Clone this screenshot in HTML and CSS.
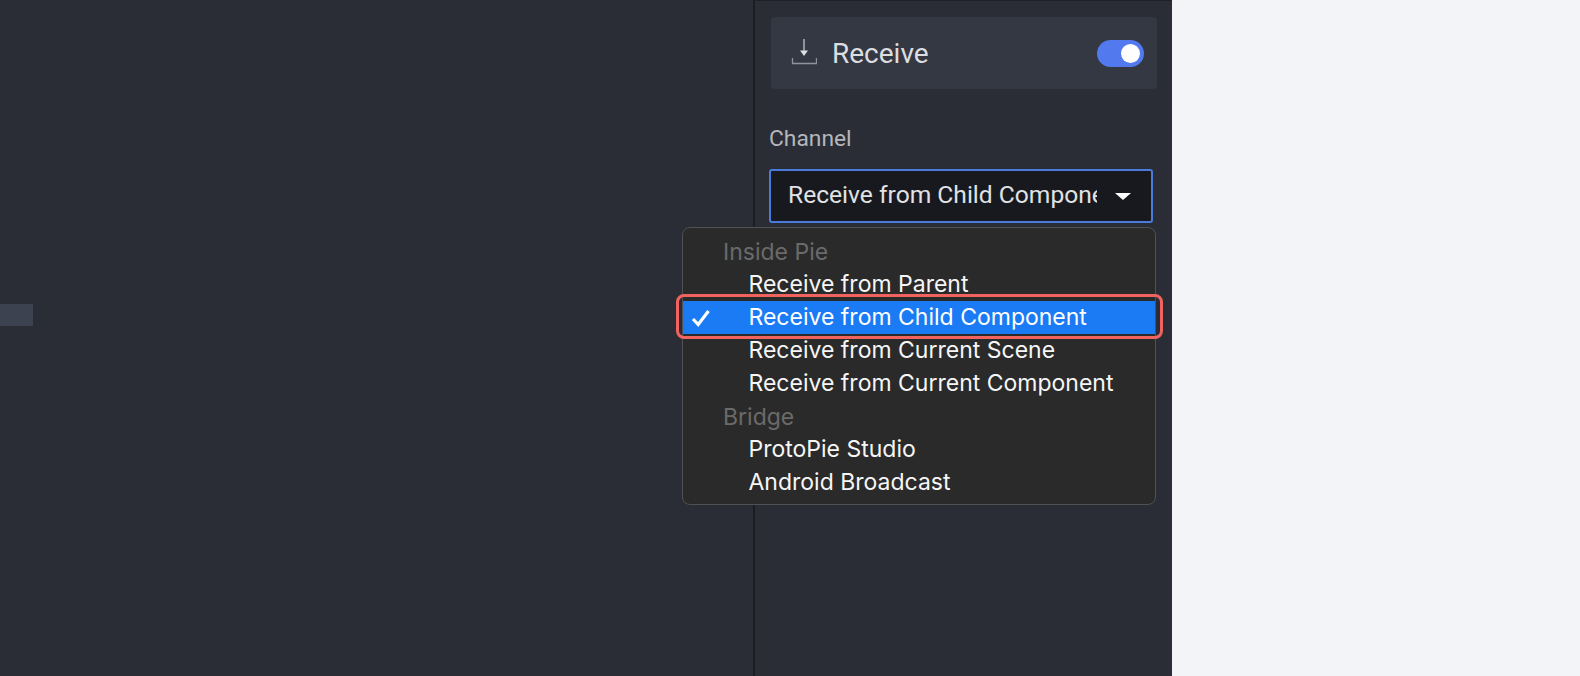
FILE: index.html
```html
<!DOCTYPE html>
<html lang="en">
<head>
<meta charset="utf-8">
<title>Receive</title>
<link rel="stylesheet" href="styles.css">
</head>
<body>
<div class="app">
  <main class="canvas"><div class="canvas-bar"></div></main>
  <aside class="panel">
    <div class="card">
      <svg class="card-icon" width="28" height="28" viewBox="0 0 28 28" fill="none">
        <path d="M15 1V14" stroke="#c3c5ca" stroke-width="1.3"/>
        <path d="M11 12.5h8L15 18z" fill="#dcdde0"/>
        <path d="M3.5 20v5.5h24V20" stroke="#8f929a" stroke-width="1.3"/>
      </svg>
      <span class="card-title">Receive</span>
      <span class="toggle"><span class="knob"></span></span>
    </div>
    <div class="label">Channel</div>
    <div class="select">
      <span class="select-text">Receive from Child Component</span>
      <span class="caret"></span>
    </div>
  </aside>
  <div class="blank"></div>
</div>
<div class="menu">
  <div class="group">Inside Pie</div>
  <div class="item">Receive from Parent</div>
  <div class="item selected">
    <svg class="check" width="20" height="18" viewBox="0 0 20 18" fill="none"><path d="M2 10l5.2 5.5L17.5 2" stroke="#fff" stroke-width="3.2"/></svg>
    Receive from Child Component
  </div>
  <div class="item">Receive from Current Scene</div>
  <div class="item">Receive from Current Component</div>
  <div class="group">Bridge</div>
  <div class="item">ProtoPie Studio</div>
  <div class="item">Android Broadcast</div>
</div>
<div class="highlight"></div>
</body>
</html>
```
FILE: styles.css
```css
* { box-sizing: border-box; }
html, body { margin: 0; height: 100%; overflow: hidden; }
body { background: #f3f4f8; font-family: Roboto, "Liberation Sans", sans-serif; }
.app { display: flex; height: 676px; }
.canvas { width: 753px; background: #2a2d36; padding-top: 304px; }
.canvas-bar { width: 33px; height: 22px; background: #3c424f; }
.panel { width: 419px; background: #2a2d36; border-left: 2px solid #1b1d23; border-top: 1px solid #1f2128; padding: 16px 15px 0 14px; }
.blank { flex: 1; background: #f3f4f8; }
.card { height: 72px; margin-left: 2px; background: #343842; border-radius: 4px; display: flex; align-items: center; padding: 0 13px 0 18px; }
.card-icon { margin-top: -2px; }
.card-title { margin-left: 15px; font-size: 28px; color: #dcdde0; flex: 1; }
.toggle { width: 47px; height: 27px; border-radius: 14px; background: #5279ee; display: flex; align-items: center; justify-content: flex-end; padding-right: 4px; }
.knob { width: 19px; height: 19px; border-radius: 50%; background: #fff; }
.label { margin-top: 36px; font-size: 22.8px; line-height: 28px; color: #b4b6bb; }
.select { margin: 16px 4px 0 0; height: 54px; background: #17191e; border: 2px solid #4a7bdc; border-radius: 3px; display: flex; align-items: center; padding: 0 16px 0 17px; }
.select-text { width: 309px; padding-bottom: 4px; overflow: hidden; white-space: nowrap; font-size: 24.6px; color: #e1e2e4; }
.caret { margin-left: 18px; border-left: 8px solid transparent; border-right: 8px solid transparent; border-top: 7px solid #fff; }
.menu { position: absolute; left: 682px; top: 227px; width: 474px; height: 278px; padding: 7px 0 0; background: #2a2a2a; border: 1px solid #505154; border-radius: 8px; font-family: Inter, Roboto, sans-serif; font-size: 23px; color: #f6f6f6; }
.group, .item { height: 33px; line-height: 33px; white-space: nowrap; }
.group { padding-left: 40px; line-height: 35px; color: #6a6a6a; }
.item { position: relative; padding-left: 65.5px; }
.selected { background: #1a7bf5; color: #fff; }
.check { position: absolute; left: 8px; top: 8px; }
.highlight { position: absolute; left: 676px; top: 294px; width: 487px; height: 45px; border: 3px solid #f0635f; border-radius: 8px; }
```
